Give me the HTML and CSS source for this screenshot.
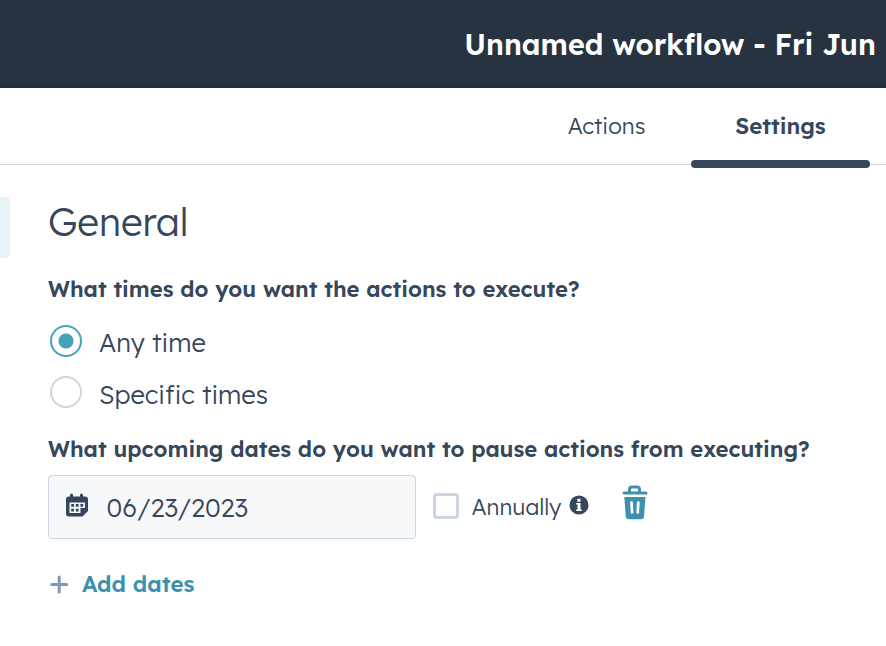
FILE: index.html
```html
<!DOCTYPE html>
<html lang="en">
<head>
    <meta charset="UTF-8">
    <meta name="viewport" content="width=device-width, initial-scale=1.0">
    <title>Workflow settings</title>
    <link rel="stylesheet" href="styles.css">
</head>
<body>
    <header class="header">
        <h1>Unnamed workflow - Fri Jun <span class="title-end">9</span></h1>
    </header>

    <nav class="tabs">
        <a class="tab">Actions</a>
        <a class="tab active">Settings</a>
    </nav>

    <div class="layout">
        <div class="side-item"></div>

        <main class="content">
            <h2>General</h2>

            <div class="question times">What times do you want the actions to execute?</div>
            <label class="radio-row">
                <input type="radio" name="times" checked>
                <span>Any time</span>
            </label>
            <label class="radio-row">
                <input type="radio" name="times">
                <span>Specific times</span>
            </label>

            <div class="question dates">What upcoming dates do you want to pause actions from executing?</div>
            <div class="date-row">
                <div class="date-input">
                    <svg width="24" height="26" viewBox="0 0 24 26">
                        <path fill="#36475b" d="M4 3.500V2a1.500 1.500 0 0 1 3 0v1.500h7V2a1.500 1.500 0 0 1 3 0v1.500h2a3 3 0 0 1 3 3V18l-5.500 5.500H3a3 3 0 0 1-3-3v-14a3 3 0 0 1 3-3z"/>
                        <path fill="#f6f8fa" d="M3.500 9.500h15.500v5.500h-4.500v5H3.500z"/>
                        <path fill="#36475b" d="M5.200 11h2.800v2.800H5.200zM9.800 11h2.800v2.800H9.800zM14.400 11h2.800v2.800h-2.800zM5.200 15.700h2.800v2.800H5.200zM9.800 15.700h2.800v2.800H9.800z"/>
                    </svg>
                    <span>06/23/2023</span>
                </div>
                <label class="annually">
                    <input type="checkbox">
                    <span>Annually</span>
                </label>
                <svg class="info" width="20" height="20" viewBox="0 0 20 20">
                    <circle cx="10" cy="10" r="9.500" fill="#36475b"/>
                    <path fill="#fff" d="M8.300 3.800h3.200v2.900H8.300zM7.200 8h4.300v6.500h1.300V16H7.200v-1.500h1.300v-5H7.200z"/>
                </svg>
                <svg class="trash" width="26" height="36" viewBox="0 0 26 36">
                    <path fill="none" stroke="#3e91ae" stroke-width="3" d="M7.500 8V4.500a2.500 2.500 0 0 1 2.500-2.500h5a2.500 2.500 0 0 1 2.500 2.500V8"/>
                    <path fill="none" stroke="#3e91ae" stroke-width="3" stroke-linecap="round" d="M2 8h22"/>
                    <path fill="#3e91ae" d="M2.300 12h21.200l-1.500 19.500a3 3 0 0 1-3 2.800H6.800a3 3 0 0 1-3-2.800z"/>
                    <path fill="none" stroke="#fff" stroke-width="2.700" stroke-linecap="round" d="M9.500 17.500l.6 10M16.300 17.500l-.6 10"/>
                </svg>
            </div>

            <a class="add-dates">
                <svg width="20" height="20" viewBox="0 0 20 20">
                    <path fill="none" stroke="#7c98b6" stroke-width="3" stroke-linecap="round" d="M10.200 3v15M2.700 10.500h15"/>
                </svg>
                <span>Add dates</span>
            </a>
        </main>
    </div>
</body>
</html>
```
FILE: styles.css
```css
* {
    box-sizing: border-box;
}
body {
    margin: 0;
    background: #fff;
    color: #36475b;
    font-family: "Lexend Deca", Inter, sans-serif;
    font-weight: 300;
    overflow: hidden;
    white-space: nowrap;
}
.header {
    height: 88px;
    padding-left: 464.2px;
    background: #283341;
    border-bottom: 3px solid #262f3e;
    color: #fff;
}
h1 {
    margin: 0;
    font-size: 28.8px;
    font-weight: 600;
    line-height: 88px;
}
.title-end {
    margin-left: 1px;
}
.tabs {
    display: flex;
    height: 77px;
    padding-left: 523px;
    border-bottom: 1px solid #cbd6e2;
    font-size: 22.4px;
    line-height: 76px;
}
.tab {
    width: 167px;
    height: 80px;
    margin-right: 1px;
    text-align: center;
}
.tab.active {
    width: 179px;
    font-size: 22.2px;
    font-weight: 600;
}
.tab.active::after {
    content: "";
    display: block;
    height: 8px;
    margin-top: -4px;
    border-radius: 4px;
    background: #36475b;
}
.layout {
    display: flex;
}
.side-item {
    width: 10px;
    height: 61px;
    margin-top: 32px;
    border-radius: 0 4px 4px 0;
    background: #e5f5f8;
}
.content {
    padding-left: 38px;
}
h2 {
    margin: 33px 0 0;
    font-size: 38.4px;
    font-weight: 300;
    line-height: 48px;
}
.question {
    font-size: 22.04px;
    font-weight: 600;
    line-height: 30px;
}
.times {
    margin: 28px 0 12px;
}
.dates {
    margin: 14px 0 11px;
}
.radio-row {
    display: flex;
    align-items: center;
    height: 52px;
    font-size: 25.6px;
}
.radio-row input {
    appearance: none;
    width: 32px;
    height: 32px;
    margin: -4px 17px 0 2px;
    border: 2px solid #cbd6e2;
    border-radius: 50%;
}
.radio-row input:checked {
    margin-top: -2px;
    border-color: #45a2b9;
    background: radial-gradient(circle, #45a2b9 7px, transparent 8px);
}
.date-row {
    display: flex;
    align-items: center;
    height: 64px;
}
.date-input {
    display: flex;
    align-items: center;
    width: 368px;
    height: 64px;
    padding-left: 17px;
    border: 1px solid #cbd6e2;
    border-radius: 4px;
    background: #f6f8fa;
    font-size: 25.6px;
}
.date-input svg {
    margin: -2px 16.5px 0 0;
}
.annually {
    display: flex;
    align-items: center;
    margin-left: 17px;
    font-size: 22.4px;
}
.annually input {
    appearance: none;
    width: 26px;
    height: 26px;
    margin: -2px 12.5px 0 0;
    border: 3px solid #cbd6e2;
    border-radius: 4px;
}
.annually span {
    width: 97.5px;
}
.info {
    margin-top: -4px;
}
.trash {
    margin: -9px 0 0 33px;
}
.add-dates {
    display: flex;
    align-items: center;
    gap: 13px;
    margin: 30px 0 0 1px;
    color: #3e91ae;
    font-size: 22.3px;
    font-weight: 600;
    line-height: 30px;
}
```
